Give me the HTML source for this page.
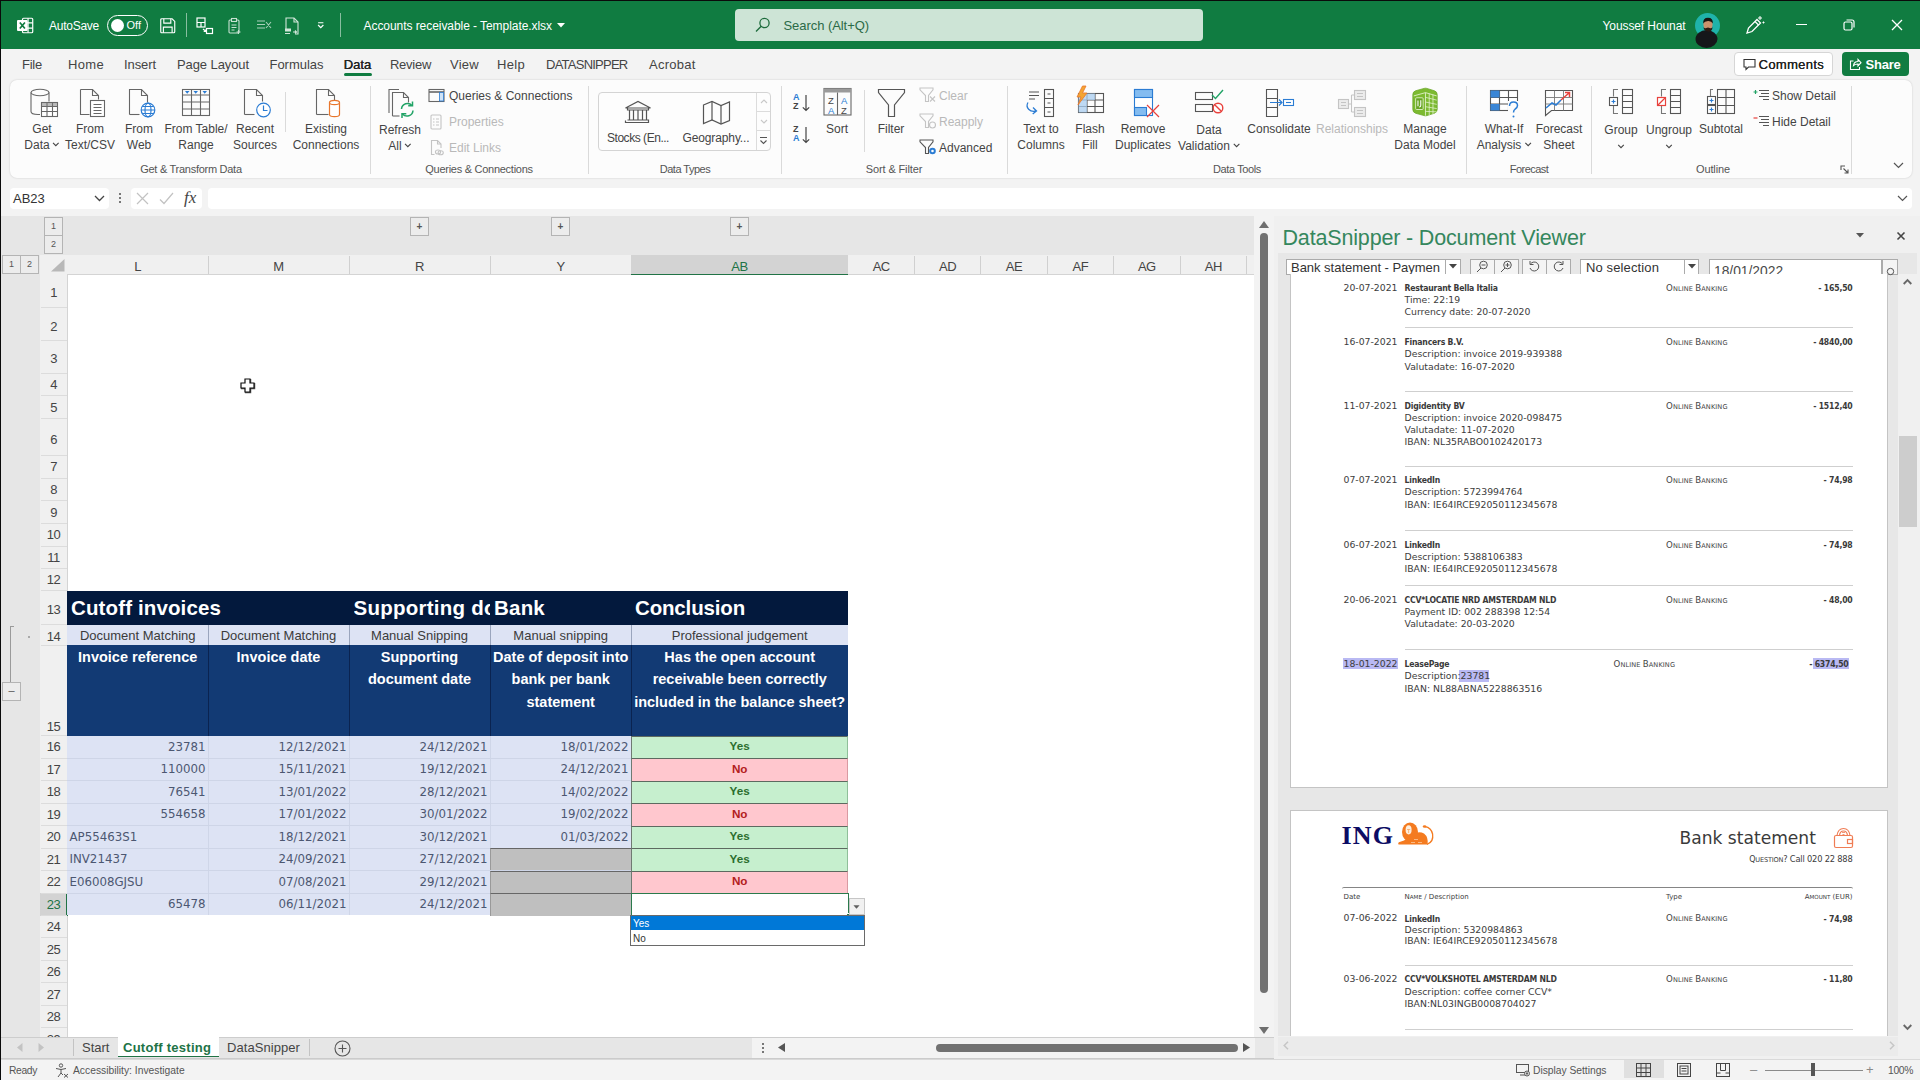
<!DOCTYPE html>
<html lang="en">
<head>
<meta charset="utf-8">
<title>Accounts receivable - Template.xlsx - Excel</title>
<style>
*{box-sizing:border-box;margin:0;padding:0}
html,body{width:1920px;height:1080px;overflow:hidden;background:#f3f3f3;font-family:"Liberation Sans",sans-serif;color:#333}
.a{position:absolute}
.t{position:absolute;white-space:nowrap;line-height:1}
svg{position:absolute;overflow:visible}
#titlebar{left:0;top:0;width:1920px;height:49px;background:#107c41}
#titlebar .t{color:#fff;font-size:12px}
#tabs .t{font-size:13px;color:#444;top:58.400px}
.iv{position:relative;display:inline-block;vertical-align:middle;margin-left:3px;top:-1px}
#ribbon{left:10px;top:80px;width:1902px;height:98px;background:#fcfcfc;border-radius:7px;box-shadow:0 0 2px rgba(0,0,0,.18)}
#ribbon .t{font-size:12px;color:#444}
#ribbon .c{text-align:center;transform:translateX(-50%)}
#ribbon .g{font-size:11px;color:#555;top:83.5px;text-align:center;transform:translateX(-50%)}
#ribbon .d{color:#b4b4b4}
.vsep{position:absolute;width:1px;background:#d8d8d8;top:13px;height:82px}
</style>
</head>
<body>
<div id="titlebar" class="a">
 <!-- excel icon -->
 <svg style="left:16.500px;top:16.500px" width="17" height="17" viewBox="0 0 20 20" fill="none" stroke="#fff" stroke-width="1.4">
  <rect x="6.5" y="1.5" width="12" height="17" rx="1.2"/>
  <path d="M6.5 7h12M6.5 13h12M13 1.5v17"/>
  <rect x="0" y="3.500" width="12.500" height="13" rx="1.200" fill="#fff" stroke="none"/>
  <path d="M3.300 6.500l6 7M9.300 6.500l-6 7" stroke="#107c41" stroke-width="2"/>
 </svg>
 <div class="t" style="left:49px;top:19.5px;font-size:12px;letter-spacing:-0.256px">AutoSave</div>
 <div class="a" style="left:107px;top:15px;width:41px;height:21px;border:1.800px solid #fff;border-radius:11px"></div>
 <div class="a" style="left:111px;top:19px;width:13px;height:13px;border-radius:50%;background:#fff"></div>
 <div class="t" style="left:126.5px;top:20px;font-size:11px;letter-spacing:0.005px">Off</div>
 <!-- save -->
 <svg style="left:159px;top:17px" width="17.500" height="17.500" viewBox="0 0 20 20" fill="none" stroke="#fff" stroke-width="1.3">
  <path d="M2 3.2Q2 2 3.2 2H15l3 3v11.800Q18 18 16.800 18H3.200Q2 18 2 16.800Z"/>
  <path d="M5.500 2v5h8V2M5 18v-6.500h10V18"/>
 </svg>
 <div class="a" style="left:186px;top:13px;width:1px;height:24px;background:rgba(255,255,255,.5)"></div>
 <!-- qat icons -->
 <svg style="left:196px;top:17px" width="18" height="18" viewBox="0 0 18 18" fill="none" stroke="#fff" stroke-width="1.2">
  <rect x="1" y="1" width="8" height="9"/><path d="M1 5.500h8M5 5.500v4.500"/><rect x="10.500" y="11.500" width="6" height="5"/><path d="M7 12l3 2.500M10 14.500v-2.300M10 14.500h-2.300"/>
 </svg>
 <svg style="left:228px;top:17px" width="14" height="18" viewBox="0 0 14 18" fill="none" stroke="#e8f3ec" stroke-width="1.100" opacity=".85">
  <rect x="1" y="3" width="10" height="13" rx="1"/><rect x="3.500" y="1.500" width="5" height="3" fill="#107c41"/><path d="M3.500 8h5M3.500 10.500h5M3.500 13h3M10.500 13v4M8.500 15h4"/>
 </svg>
 <svg style="left:256px;top:19px" width="16" height="12" viewBox="0 0 16 12" fill="none" stroke="#cfe6d8" stroke-width="1.100" opacity=".8">
  <path d="M1 2h8M1 5.500h8M1 9h8M10 3l5 6M15 3l-5 6"/>
 </svg>
 <svg style="left:284px;top:16px" width="16" height="20" viewBox="0 0 16 20" fill="none" stroke="#e8f3ec" stroke-width="1.100" opacity=".9">
  <path d="M2 13V2h8l4 4v12h-3"/><path d="M10 2v4h4"/><rect x="1" y="12.500" width="6" height="3" fill="#e8f3ec" stroke="none"/><path d="M1 17.500h5M9 16h3M11 14.500l1.500 1.500-1.500 1.500"/>
 </svg>
 <svg style="left:316.500px;top:22px" width="7.500" height="6.800" viewBox="0 0 10 9" fill="none" stroke="#fff" stroke-width="1.600">
  <path d="M1.500 1h7M1.500 4l3.500 3.500L8.500 4"/>
 </svg>
 <div class="a" style="left:339.500px;top:13px;width:1px;height:24px;background:rgba(255,255,255,.5)"></div>
 <div class="t" style="left:363.5px;top:19.5px;font-size:12px;letter-spacing:-0.058px">Accounts receivable - Template.xlsx</div>
 <svg style="left:557px;top:23px" width="8" height="5" viewBox="0 0 8 5"><path d="M0 0h8L4 4.500Z" fill="#fff"/></svg>
 <!-- search -->
 <div class="a" style="left:735px;top:9px;width:468px;height:32px;background:#cde4d6;border-radius:4px"></div>
 <svg style="left:755px;top:17px" width="16" height="16" viewBox="0 0 16 16" fill="none" stroke="#1d6b3c" stroke-width="1.300"><circle cx="9.500" cy="6" r="4.600"/><path d="M6.200 9.300L1 14.500"/></svg>
 <div class="t" style="left:783.5px;top:18.5px;font-size:13px;color:#2b6a47;letter-spacing:-0.060px">Search (Alt+Q)</div>
 <!-- user -->
 <div class="t" style="left:1602.5px;top:19.5px;font-size:12px;letter-spacing:-0.093px">Youssef Hounat</div>
 <svg style="left:1694.500px;top:12.500px" width="25" height="25" viewBox="0 0 25 25">
  <circle cx="12.500" cy="12.500" r="12.500" fill="#1fb3aa"/>
  <ellipse cx="11.500" cy="26" rx="11" ry="9" fill="#15171a"/>
  <ellipse cx="13" cy="11.500" rx="4.600" ry="5.600" fill="#c9916d"/>
  <path d="M8.400 13.500Q8.600 18 13 18.600T17.600 13.500Q17.500 15.500 15.500 15.200L13 14.600 10.500 15.200Q8.600 15.500 8.400 13.500Z" fill="#2a1a12"/>
  <path d="M8.200 10.500Q7.800 4.800 13 4.800T17.800 10.500Q16.500 7.800 13 8T8.200 10.500Z" fill="#17130f"/>
 </svg>
 <!-- pen -->
 <svg style="left:1744px;top:14px" width="22" height="22" viewBox="0 0 22 22" fill="none" stroke="#fff" stroke-width="1.300">
  <path d="M3 19l1.500-5L13 5.500l3.500 3.500L8 17.500Z"/><path d="M11 7.500l3.500 3.500"/><path d="M16 2v4M14 4h4M19.500 7.500v2M18.500 8.500h2" stroke-width="1"/>
 </svg>
 <div class="a" style="left:1796px;top:24.300px;width:10.500px;height:1.100px;background:#fff"></div>
 <svg style="left:1843px;top:19px" width="12" height="12" viewBox="0 0 12 12" fill="none" stroke="#fff" stroke-width="1.200"><rect x="1" y="3" width="8" height="8" rx="1.500"/><path d="M3.500 1h5.500Q11 1 11 3v5.500"/></svg>
 <svg style="left:1891px;top:19px" width="12" height="12" viewBox="0 0 12 12" fill="none" stroke="#fff" stroke-width="1.300"><path d="M1 1l10 10M11 1L1 11"/></svg>
</div>
<div class="a" style="left:0;top:0;width:1920px;height:1px;background:#0a0a0a"></div>
<div class="a" style="left:0;top:0;width:1.200px;height:1080px;background:#0a0a0a;z-index:50"></div>

<div id="tabs2">
 <div id="tabs" class="a" style="left:0;top:0;width:0;height:0">
 <div class="t" style="left:22px;letter-spacing:-0.238px">File</div>
 <div class="t" style="left:68px;letter-spacing:0.328px">Home</div>
 <div class="t" style="left:124px;letter-spacing:-0.086px">Insert</div>
 <div class="t" style="left:177px;letter-spacing:-0.092px">Page Layout</div>
 <div class="t" style="left:269.5px;letter-spacing:-0.023px">Formulas</div>
 <div class="t" style="left:343.5px;color:#222;text-shadow:.4px 0 0 #222;letter-spacing:0.008px">Data</div>
 <div class="a" style="left:343.500px;top:73.300px;width:28.500px;height:2.600px;border-radius:2px;background:#107c41"></div>
 <div class="t" style="left:390px;letter-spacing:-0.271px">Review</div>
 <div class="t" style="left:450px;letter-spacing:0.262px">View</div>
 <div class="t" style="left:497px;letter-spacing:0.312px">Help</div>
 <div class="t" style="left:546px;letter-spacing:-0.757px">DATASNIPPER</div>
 <div class="t" style="left:649px;letter-spacing:0.241px">Acrobat</div>
 </div>
 <div class="a" style="left:1734px;top:52px;width:99px;height:24px;background:#fff;border:1px solid #d6d6d6;border-radius:4px"></div>
 <svg style="left:1743px;top:58px" width="13" height="13" viewBox="0 0 13 13" fill="none" stroke="#333" stroke-width="1.100"><path d="M1 1.500h11v7.500H5.500L3 11.500V9H1Z"/></svg>
 <div class="t" style="left:1758.5px;top:58px;font-size:13px;color:#222;text-shadow:.2px 0 0 #222;letter-spacing:0.330px">Comments</div>
 <div class="a" style="left:1842px;top:52px;width:67px;height:24px;background:#107c41;border-radius:4px"></div>
 <svg style="left:1849px;top:57px" width="13" height="14" viewBox="0 0 13 14" fill="none" stroke="#fff" stroke-width="1.100"><path d="M4.500 4H1.500v8.500h9V10"/><path d="M4.500 8.500Q5 4.500 9 4.500V2.500l3 3.200-3 3.200V7Q6 7 4.500 8.500Z"/></svg>
 <div class="t" style="left:1865.5px;top:58px;font-size:13px;color:#fff;font-weight:bold;letter-spacing:-0.228px">Share</div>
</div>
<div class="a" id="ribbon"></div>
<div id="rib" class="a" style="left:0;top:0;width:0;height:0">
<style>
#rib .t{font-size:12px;color:#444}
#rib .c{transform:translateX(-50%);text-align:center}
#rib .g{font-size:11px;color:#555;top:164px;transform:translateX(-50%)}
#rib .d{color:#b9b9b9}
#rib .vs{position:absolute;width:1px;background:#dadada;top:86px;height:88px}
#rib svg{fill:none;stroke:#666;stroke-width:1.100}
</style>
<!-- ===== Get & Transform ===== -->
<svg style="left:28px;top:86.500px" width="32" height="32" viewBox="0 0 32 32">
 <path d="M3 5.500v19c0 1.700 3 3 7 3h2"/><ellipse cx="12" cy="5.500" rx="9" ry="3.200"/><path d="M21 5.500v9"/>
 <rect x="13.500" y="15.500" width="16" height="14" fill="#fff"/><path d="M13.500 19.500h16M13.500 24.500h16M19 15.500v14M24.500 15.500v14" /><rect x="13.500" y="15.500" width="16" height="4" fill="#777" stroke="none" opacity=".5"/>
</svg>
<div class="t c" style="left:42px;top:123px">Get</div>
<div class="t c" style="left:42px;top:139px">Data<svg class="iv" width="7" height="5" viewBox="0 0 7 5" style="stroke:#444;stroke-width:1.100;fill:none"><path d="M.7 .8l2.800 2.800L6.300 .8"/></svg></div>
<svg style="left:76px;top:86.500px" width="32" height="32" viewBox="0 0 32 32">
 <path d="M4.500 2.500h12l6 6v4M4.500 2.500v25h9"/><path d="M16.500 2.500v6h6"/><rect x="14.500" y="13.500" width="14" height="16" fill="#fff"/><path d="M17.500 17.500h8M17.500 20.500h8M17.500 23.500h8M17.500 26.500h8"/>
</svg>
<div class="t c" style="left:90px;top:123px">From</div>
<div class="t c" style="left:90px;top:139px">Text/CSV</div>
<svg style="left:125px;top:86.500px" width="32" height="32" viewBox="0 0 32 32">
 <path d="M4.500 27.500v-25h12l6 6v7"/><path d="M16.500 2.500v6h6"/><path d="M4.500 27.500h10"/>
 <g stroke="#2b7cd3" stroke-width="1.200"><circle cx="23" cy="23" r="6.800" fill="#fff"/><ellipse cx="23" cy="23" rx="3" ry="6.800"/><path d="M16.200 23h13.600M17.500 19.500h11M17.500 26.500h11"/></g>
</svg>
<div class="t c" style="left:139px;top:123px">From</div>
<div class="t c" style="left:139px;top:139px">Web</div>
<svg style="left:180px;top:86.500px" width="32" height="32" viewBox="0 0 32 32">
 <rect x="2.500" y="2.500" width="27" height="26"/><path d="M2.500 8h27M2.500 15h27M2.500 22h27M11.500 2.500v26M20.500 2.500v26"/>
 <path d="M5 4h4.500L7.200 6.800ZM13.500 4H18l-2.300 2.800ZM22.500 4H27l-2.300 2.800Z" fill="#2b7cd3" stroke="none"/>
</svg>
<div class="t c" style="left:196px;top:123px">From Table/</div>
<div class="t c" style="left:196px;top:139px">Range</div>
<svg style="left:240px;top:86.500px" width="32" height="32" viewBox="0 0 32 32">
 <path d="M4.500 27.500v-25h12l6 6v6"/><path d="M16.500 2.500v6h6"/><path d="M4.500 27.500h10"/>
 <g stroke="#2b7cd3" stroke-width="1.200"><circle cx="23.500" cy="23" r="6.800" fill="#fff"/><path d="M23.500 18.500v5h4"/></g>
</svg>
<div class="t c" style="left:255px;top:123px">Recent</div>
<div class="t c" style="left:255px;top:139px">Sources</div>
<div class="a" style="left:285px;top:92px;width:1px;height:40px;background:#dadada"></div>
<svg style="left:311px;top:86.500px" width="32" height="32" viewBox="0 0 32 32">
 <path d="M5.500 27.500v-25h12l6 6v5"/><path d="M17.500 2.500v6h6"/><path d="M5.500 27.500h12"/>
 <g stroke="#e8762c" stroke-width="1.200"><path d="M18.500 15.500v12c0 1.200 2.200 2.200 5 2.200s5-1 5-2.200v-12" fill="#fff"/><ellipse cx="23.500" cy="15.500" rx="5" ry="2.200" fill="#fff"/></g>
</svg>
<div class="t c" style="left:326px;top:123px">Existing</div>
<div class="t c" style="left:326px;top:139px">Connections</div>
<div class="t g" style="left:191px;letter-spacing:-0.274px">Get &amp; Transform Data</div>
<div class="vs" style="left:370px"></div>
<!-- ===== Queries & Connections ===== -->
<svg style="left:384px;top:86.500px" width="32" height="32" viewBox="0 0 32 32">
 <path d="M5 26V2.500h10"/><path d="M8.500 29V5.500h11l5 5v5"/><path d="M19.500 5.500v5h5"/><path d="M8.500 29h7"/>
 <g stroke="#21a366" stroke-width="1.500"><path d="M17.500 22a6 6 0 0 1 10.500-3.500M29 23.500a6 6 0 0 1-10.500 3.500"/><path d="M28.500 14.500v4.300h-4.300M18 31v-4.300h4.300"/></g>
</svg>
<div class="t c" style="left:400px;top:124px">Refresh</div>
<div class="t c" style="left:400px;top:140px">All<svg class="iv" width="7" height="5" viewBox="0 0 7 5" style="stroke:#444;stroke-width:1.100;fill:none"><path d="M.7 .8l2.800 2.800L6.300 .8"/></svg></div>
<svg style="left:428px;top:88px" width="17" height="15" viewBox="0 0 17 15"><rect x="1" y="1.500" width="15" height="12"/><path d="M1 4h15" stroke-width="1.600"/><rect x="11.500" y="4.500" width="4" height="8.500" fill="#cfe3f7" stroke="#2b7cd3" stroke-width=".8"/></svg>
<div class="t" style="left:449px;top:90px">Queries &amp; Connections</div>
<svg style="left:430px;top:114px;stroke:#c4c4c4" width="12" height="16" viewBox="0 0 12 16"><rect x="1" y="1" width="10" height="14" rx="1"/><path d="M3 5h1.500M6 5h3M3 8h1.500M6 8h3M3 11h1.500M6 11h3"/></svg>
<div class="t d" style="left:449px;top:116px">Properties</div>
<svg style="left:430px;top:139px;stroke:#c4c4c4" width="14" height="17" viewBox="0 0 14 17"><path d="M1.500 13V1.500h6l3.500 3.500v4"/><path d="M7.500 1.500V5H11"/><path d="M1.500 13v2.500h3"/><ellipse cx="8" cy="13" rx="2.600" ry="2"/><ellipse cx="10.700" cy="13.800" rx="2.600" ry="2"/></svg>
<div class="t d" style="left:449px;top:142px">Edit Links</div>
<div class="t g" style="left:479px;letter-spacing:-0.268px">Queries &amp; Connections</div>
<div class="vs" style="left:588px"></div>
<!-- ===== Data Types ===== -->
<div class="a" style="left:598px;top:92px;width:173px;height:59px;border:1px solid #d4d4d4;border-radius:4px;background:#fdfdfd"></div>
<div class="a" style="left:756px;top:93px;width:1px;height:57px;background:#dcdcdc"></div>
<div class="a" style="left:757px;top:111px;width:13px;height:1px;background:#dcdcdc"></div>
<div class="a" style="left:757px;top:130px;width:13px;height:1px;background:#dcdcdc"></div>
<svg style="left:760px;top:99px;stroke:#c8c8c8" width="8" height="5" viewBox="0 0 8 5"><path d="M1 4l3-3 3 3"/></svg>
<svg style="left:760px;top:119px;stroke:#c8c8c8" width="8" height="5" viewBox="0 0 8 5"><path d="M1 1l3 3 3-3"/></svg>
<svg style="left:759px;top:136px;stroke:#555" width="9" height="9" viewBox="0 0 9 9"><path d="M1 1.500h7M1.500 4.500l3 3 3-3"/></svg>
<svg style="left:624px;top:100px;stroke:#555;stroke-width:1.200" width="28" height="26" viewBox="0 0 28 26"><path d="M1.500 8L14 1.500 26.500 8ZM3.500 8v2h21V8M5.500 10v10M9.500 10v10M14 10v10M18.500 10v10M22.500 10v10M3.500 20h21v2.500h-23V20.500"/></svg>
<div class="t c" style="left:638px;top:132px;letter-spacing:-0.464px">Stocks (En...</div>
<svg style="left:702px;top:100px;stroke:#555;stroke-width:1.200" width="29" height="26" viewBox="0 0 29 26"><path d="M1.500 5l8.500-3.500 9 4 8.500-3.500v18.500l-8.500 3.500-9-4-8.500 3.500Z"/><path d="M10 1.500v19M19 5.500v18.500"/></svg>
<div class="t c" style="left:716px;top:132px;letter-spacing:-0.124px">Geography...</div>
<div class="t g" style="left:685px;letter-spacing:-0.495px">Data Types</div>
<div class="vs" style="left:781px"></div>
<!-- ===== Sort & Filter ===== -->
<div class="t" style="left:793px;top:93px;font-size:9px;font-weight:bold;color:#2b7cd3">A</div>
<div class="t" style="left:793px;top:102px;font-size:9px;font-weight:bold;color:#444">Z</div>
<svg style="left:802px;top:95px;stroke:#444;stroke-width:1.200" width="8" height="17" viewBox="0 0 8 17"><path d="M4 0v15.500M.8 12.300l3.200 3.200 3.200-3.200"/></svg>
<div class="t" style="left:793px;top:125px;font-size:9px;font-weight:bold;color:#444">Z</div>
<div class="t" style="left:793px;top:134px;font-size:9px;font-weight:bold;color:#2b7cd3">A</div>
<svg style="left:802px;top:127px;stroke:#444;stroke-width:1.200" width="8" height="17" viewBox="0 0 8 17"><path d="M4 0v15.500M.8 12.300l3.200 3.200 3.200-3.200"/></svg>
<svg style="left:823px;top:86.500px" width="29" height="29" viewBox="0 0 29 29"><rect x="1" y="1.500" width="27" height="26.500"/><rect x="1" y="1.500" width="27" height="4" fill="#9a9a9a" stroke="none"/><path d="M14.500 5.500v22.500"/></svg>
<div class="t" style="left:828px;top:96px;font-size:9.500px;color:#444">Z</div><div class="t" style="left:841px;top:96px;font-size:9.500px;color:#2b7cd3">A</div>
<div class="t" style="left:828px;top:106px;font-size:9.500px;color:#2b7cd3">A</div><div class="t" style="left:841px;top:106px;font-size:9.500px;color:#444">Z</div>
<div class="t c" style="left:837px;top:123px">Sort</div>
<div class="a" style="left:864px;top:90px;width:1px;height:62px;background:#dadada"></div>
<svg style="left:877px;top:88px;stroke:#555;stroke-width:1.200" width="29" height="30" viewBox="0 0 29 30"><path d="M1.500 1.500h26v3L17.500 17v11.500h-6V17L1.500 4.500Z"/></svg>
<div class="t c" style="left:891px;top:123px">Filter</div>
<svg style="left:919px;top:87px;stroke:#c4c4c4" width="18" height="17" viewBox="0 0 18 17"><path d="M1 1h13v1.800L9.500 8.500v6h-3v-6L1 2.800Z"/><path d="M11 9.500l5 5M16 9.500l-5 5"/></svg>
<div class="t d" style="left:939px;top:90px">Clear</div>
<svg style="left:919px;top:113px;stroke:#c4c4c4" width="18" height="17" viewBox="0 0 18 17"><path d="M1 1h13v1.800L9.500 8.500v6h-3v-6L1 2.800Z"/><circle cx="13.500" cy="12" r="3"/></svg>
<div class="t d" style="left:939px;top:116px">Reapply</div>
<svg style="left:919px;top:139px;stroke:#555" width="18" height="17" viewBox="0 0 18 17"><path d="M1 1h13v1.800L9.500 8.500v6h-3v-6L1 2.800Z"/><circle cx="13.500" cy="12" r="2.300" stroke="#2b7cd3" stroke-width="2" fill="#fff"/></svg>
<div class="t" style="left:939px;top:142px">Advanced</div>
<div class="t g" style="left:894px;letter-spacing:-0.121px">Sort &amp; Filter</div>
<div class="vs" style="left:1007px"></div>
<!-- ===== Data Tools ===== -->
<svg style="left:1025px;top:86.500px" width="32" height="32" viewBox="0 0 32 32">
 <path d="M4 5h10M4 8.500h10M4 12h6" stroke="#555"/><path d="M3 15.500c-3 5 2 10 8 8.500M8 20.500l3.500 3.500-3.800 3" stroke="#2b7cd3" stroke-width="1.300"/>
 <rect x="19.500" y="2.500" width="9" height="27" stroke="#555"/><path d="M19.500 11.500h9M19.500 20.500h9M22.500 7h3M22.500 16h3M22.500 25h3" stroke="#555"/>
</svg>
<div class="t c" style="left:1041px;top:123px">Text to</div>
<div class="t c" style="left:1041px;top:139px">Columns</div>
<svg style="left:1074px;top:85px" width="32" height="32" viewBox="0 0 32 32">
 <rect x="4.500" y="8.500" width="25" height="19" stroke="#555"/><path d="M4.500 15h25M4.500 21.500h25M13 8.500v19M21 8.500v19" stroke="#555"/><path d="M4.500 8.500h16.500v6.500H13v12.500H4.500Z" fill="#a9cdf0" stroke="none" opacity=".75"/>
 <path d="M8.500 1L3 12h4l-3 8L13 8H8.500L12 1Z" fill="#f4a533" stroke="#e8762c" stroke-width=".8"/>
</svg>
<div class="t c" style="left:1090px;top:123px">Flash</div>
<div class="t c" style="left:1090px;top:139px">Fill</div>
<svg style="left:1129px;top:86.500px" width="32" height="32" viewBox="0 0 32 32">
 <rect x="5.500" y="2.500" width="18" height="26" stroke="#2b7cd3" fill="#fff"/><rect x="5.500" y="2.500" width="18" height="8" fill="#84bcf0" stroke="#2b7cd3"/><rect x="5.500" y="20.500" width="12" height="8" fill="#84bcf0" stroke="#2b7cd3"/>
 <path d="M18 18l12 12M30 18L18 30" stroke="#e8413c" stroke-width="1.200"/>
</svg>
<div class="t c" style="left:1143px;top:123px">Remove</div>
<div class="t c" style="left:1143px;top:139px">Duplicates</div>
<svg style="left:1193px;top:86.500px" width="32" height="32" viewBox="0 0 32 32">
 <rect x="2.500" y="5.500" width="17" height="7" stroke="#555"/><rect x="2.500" y="17.500" width="17" height="7" stroke="#555"/>
 <path d="M19 8l3.500 3.500L30 3" stroke="#21a366" stroke-width="1.400"/><circle cx="25" cy="21" r="4.800" stroke="#e8413c" stroke-width="1.400" fill="#fff"/><path d="M21.700 17.700l6.600 6.600" stroke="#e8413c" stroke-width="1.400"/>
</svg>
<div class="t c" style="left:1209px;top:124px;letter-spacing:0.008px">Data</div>
<div class="t c" style="left:1209px;top:140px">Validation<svg class="iv" width="7" height="5" viewBox="0 0 7 5" style="stroke:#444;stroke-width:1.100;fill:none"><path d="M.7 .8l2.800 2.800L6.300 .8"/></svg></div>
<svg style="left:1263px;top:86.500px" width="32" height="32" viewBox="0 0 32 32">
 <path d="M3.500 2.500h11v9h-11ZM3.500 11.500v9h11v-9M3.500 20.500v9h11v-9" stroke="#555"/><path d="M7 15.500h12M16 12.500l3 3-3 3" stroke="#2b7cd3" stroke-width="1.200"/><rect x="20.500" y="12.500" width="10" height="6" stroke="#2b7cd3" fill="#fff"/><path d="M23 15.500h5" stroke="#2b7cd3"/>
</svg>
<div class="t c" style="left:1279px;top:123px">Consolidate</div>
<svg style="left:1337px;top:88px;stroke:#c4c4c4" width="32" height="32" viewBox="0 0 32 32">
 <rect x="1.500" y="11.500" width="10" height="9" fill="#ececec"/><rect x="17.500" y="2.500" width="11" height="9" fill="#ececec"/><rect x="17.500" y="19.500" width="11" height="9" fill="#ececec"/><path d="M11.500 16h3M14.500 7v17M14.500 7h3M14.500 24h3M4 14.500h5M4 17.500h5M20 5.500h6M20 8.500h6M20 22.500h6M20 25.500h6"/>
</svg>
<div class="t c d" style="left:1352px;top:123px">Relationships</div>
<svg style="left:1410px;top:86px" width="30" height="32" viewBox="0 0 32 32">
 <path d="M3 8Q3 5 6 4L15 1.500Q16.500 1 18 1.500L26 4Q29 5 29 8V24Q29 27 26 28L18 30.500Q16.500 31 15 30.500L6 28Q3 27 3 24Z" fill="#7cba30" stroke="#6aa628" stroke-width=".8"/>
 <path d="M16.500 6V30.500M16.500 6L4 9.500M16.500 6L28.500 9.500" stroke="#e6f4d2" stroke-width=".9"/>
 <path d="M16.500 11l12 3M16.500 16l12 2.500M16.500 21l12 2M16.500 26l12 .5M20.500 7v23M24.500 8v21" stroke="#e6f4d2" stroke-width=".8"/>
 <rect x="6" y="11.500" width="8" height="12.500" rx="1" fill="#68a524" stroke="#e6f4d2" stroke-width=".9"/>
 <path d="M8.500 14.500v6M11.500 14v5.500q0 1.800-1.800 1.800" stroke="#fff" stroke-width="1.100"/>
</svg>
<div class="t c" style="left:1425px;top:123px">Manage</div>
<div class="t c" style="left:1425px;top:139px">Data Model</div>
<div class="t g" style="left:1237px;letter-spacing:-0.378px">Data Tools</div>
<div class="vs" style="left:1466px"></div>
<!-- ===== Forecast ===== -->
<svg style="left:1488px;top:86.500px" width="32" height="32" viewBox="0 0 32 32">
 <rect x="2.500" y="3.500" width="27" height="20" stroke="#555" fill="#fff"/><path d="M2.500 10.500h27M2.500 17h27M11.500 3.500v20M20.500 3.500v20" stroke="#555"/><rect x="2.500" y="3.500" width="9" height="7" fill="#3a86d6" stroke="none"/><rect x="2.500" y="17" width="9" height="6.500" fill="#3a86d6" stroke="none"/>
 <rect x="20" y="14" width="12" height="17" fill="#fcfcfc" stroke="none"/><path d="M21.500 19q0-4 4-4t4 3.500q0 2-2.300 3.500-1.700 1.200-1.700 3.500" stroke="#2b7cd3" stroke-width="1.500"/><circle cx="25.500" cy="29.500" r="1" fill="#2b7cd3" stroke="none"/>
</svg>
<div class="t c" style="left:1504px;top:123px">What-If</div>
<div class="t c" style="left:1504px;top:139px">Analysis<svg class="iv" width="7" height="5" viewBox="0 0 7 5" style="stroke:#444;stroke-width:1.100;fill:none"><path d="M.7 .8l2.800 2.800L6.300 .8"/></svg></div>
<svg style="left:1543px;top:86.500px" width="32" height="32" viewBox="0 0 32 32">
 <path d="M2.500 3.500h27v20h-21l-6 5Z" stroke="#555"/><path d="M2.500 10.500h27M2.500 17h27M11.500 3.500v20M20.500 3.500v20" stroke="#777" stroke-width=".9"/>
 <path d="M3 21l6-5 4 2 5-5" stroke="#2b7cd3" stroke-width="1.500"/><path d="M18 13l8-7M22 5.500h4.500V10" stroke="#e8413c" stroke-width="1.500"/>
</svg>
<div class="t c" style="left:1559px;top:123px">Forecast</div>
<div class="t c" style="left:1559px;top:139px">Sheet</div>
<div class="t g" style="left:1529px;letter-spacing:-0.537px">Forecast</div>
<div class="vs" style="left:1591px"></div>
<!-- ===== Outline ===== -->
<svg style="left:1605px;top:86.500px" width="32" height="32" viewBox="0 0 32 32">
 <rect x="17.500" y="2.500" width="10" height="24" stroke="#555"/><path d="M17.500 8.500h10M17.500 14.500h10M17.500 20.500h10" stroke="#555"/><path d="M13 2.500H8.500v7M8.500 19v7.500H13" stroke="#777"/>
 <rect x="4.500" y="10.500" width="8" height="8" stroke="#555" fill="#fff"/><path d="M8.500 12.500v4M6.500 14.500h4" stroke="#2b7cd3" stroke-width="1.200"/>
</svg>
<div class="t c" style="left:1621px;top:124px">Group</div>
<div class="t c" style="left:1621px;top:141px"><svg class="iv" width="7" height="5" viewBox="0 0 7 5" style="margin-left:0;stroke:#444;stroke-width:1.100;fill:none"><path d="M.7 .8l2.800 2.800L6.300 .8"/></svg></div>
<svg style="left:1653px;top:86.500px" width="32" height="32" viewBox="0 0 32 32">
 <rect x="17.500" y="2.500" width="10" height="24" stroke="#555"/><path d="M17.500 8.500h10M17.500 14.500h10M17.500 20.500h10" stroke="#555"/><path d="M13 2.500H8.500v7M8.500 19v7.500H13" stroke="#777"/>
 <rect x="4.500" y="10.500" width="8" height="8" stroke="#e8413c" fill="#fff" stroke-width="1.200"/><path d="M5 18l7-7" stroke="#e8413c" stroke-width="1.200"/>
</svg>
<div class="t c" style="left:1669px;top:124px">Ungroup</div>
<div class="t c" style="left:1669px;top:141px"><svg class="iv" width="7" height="5" viewBox="0 0 7 5" style="margin-left:0;stroke:#444;stroke-width:1.100;fill:none"><path d="M.7 .8l2.800 2.800L6.300 .8"/></svg></div>
<svg style="left:1705px;top:86.500px" width="32" height="32" viewBox="0 0 32 32">
 <rect x="12.500" y="2.500" width="17" height="24" stroke="#555"/><path d="M12.500 10.500h17M12.500 18.500h17M21 2.500v24" stroke="#555"/><path d="M8 2.500H5.500v7" stroke="#777"/>
 <rect x="2.500" y="9.500" width="8" height="8" stroke="#555" fill="#fff"/><path d="M6.500 11.500v4M4.500 13.500h4" stroke="#2b7cd3" stroke-width="1.200"/>
 <rect x="2.500" y="18.500" width="8" height="8" stroke="#555" fill="#fff"/><path d="M6.500 20.500v4M4.500 22.500h4" stroke="#2b7cd3" stroke-width="1.200"/>
</svg>
<div class="t c" style="left:1721px;top:123px">Subtotal</div>
<svg style="left:1753px;top:89px" width="17" height="12" viewBox="0 0 17 12"><path d="M6 1.500h10M8 4.500h8M6 7.500h10M10 10.500h6" stroke="#555" stroke-width="1.200"/><path d="M.5 3h4M2.500 1v4" stroke="#21a366" stroke-width="1.200"/></svg>
<div class="t" style="left:1772px;top:90px">Show Detail</div>
<svg style="left:1753px;top:115px" width="17" height="12" viewBox="0 0 17 12"><path d="M6 1.500h10M8 4.500h8M6 7.500h10M10 10.500h6" stroke="#555" stroke-width="1.200"/><path d="M.5 3h4" stroke="#e8413c" stroke-width="1.200"/></svg>
<div class="t" style="left:1772px;top:116px">Hide Detail</div>
<div class="t g" style="left:1713px;letter-spacing:-0.123px">Outline</div>
<svg style="left:1840px;top:165px" width="9" height="9" viewBox="0 0 9 9"><path d="M1 5V1h4M3.500 3.500l4.500 4.500M8 4.500V8H4.500" stroke="#555"/></svg>
<div class="vs" style="left:1851px"></div>
<svg style="left:1893px;top:162px" width="11" height="7" viewBox="0 0 11 7"><path d="M1 1l4.500 4.500L10 1" stroke="#555" stroke-width="1.200"/></svg>
</div>
<!-- ===== Formula bar ===== -->
<div class="a" style="left:10px;top:188px;width:99px;height:21px;background:#fff;border-radius:4px"></div>
<div class="t" style="left:13px;top:192px;font-size:13px;color:#333">AB23</div>
<svg style="left:94px;top:195px" width="11" height="7" viewBox="0 0 11 7" fill="none" stroke="#444" stroke-width="1.300"><path d="M1 1l4.500 4.500L10 1"/></svg>
<div class="a" style="left:119px;top:193px;width:2px;height:2px;background:#777;box-shadow:0 4px 0 #777,0 8px 0 #777"></div>
<div class="a" style="left:131px;top:188px;width:71px;height:21px;background:#fff;border-radius:4px"></div>
<svg style="left:136px;top:192px" width="13" height="13" viewBox="0 0 13 13" fill="none" stroke="#c2c2c2" stroke-width="1.200"><path d="M1 1l11 11M12 1L1 12"/></svg>
<svg style="left:159px;top:192px" width="15" height="13" viewBox="0 0 15 13" fill="none" stroke="#c2c2c2" stroke-width="1.200"><path d="M1 7.500l4 4L14 1"/></svg>
<div class="t" style="left:184px;top:188.500px;font-size:17px;color:#444;font-family:'Liberation Serif',serif;font-style:italic">fx</div>
<div class="a" style="left:208px;top:188px;width:1704px;height:21px;background:#fff;border-radius:4px"></div>
<svg style="left:1897px;top:195px" width="11" height="7" viewBox="0 0 11 7" fill="none" stroke="#555" stroke-width="1.200"><path d="M1 1l4.500 4.500L10 1"/></svg>
<style>
#sheet .rh{position:absolute;left:40px;width:27px;text-align:center;font-size:13px;letter-spacing:-.6px;color:#444;line-height:1;white-space:nowrap}
#sheet .rl{position:absolute;left:41px;width:26px;height:1px;background:#dcdcdc}
#sheet .ch{position:absolute;top:259.500px;font-size:13px;letter-spacing:-.5px;color:#444;line-height:1;transform:translateX(-50%);white-space:nowrap}
#sheet .cl{position:absolute;top:256px;width:1px;height:18px;background:#d0d0d0}
#sheet .ob{position:absolute;width:19px;height:19px;border:1px solid #b4b4b4;background:#ececec;font-size:9px;color:#555;text-align:center;line-height:17px}
#sheet .cell{position:absolute;white-space:nowrap;line-height:1;font-family:"DejaVu Sans","Liberation Sans",sans-serif;font-size:11.800px;color:#4c5771}
#sheet .h14{position:absolute;font-size:13px;color:#3b3b3b;text-align:center;line-height:1;white-space:nowrap}
#sheet .h15{position:absolute;font-size:14.500px;font-weight:bold;color:#fff;text-align:center;line-height:22.250px;top:646px}
#sheet .h13{position:absolute;font-size:20.500px;font-weight:bold;color:#fff;line-height:1;top:598px;white-space:nowrap;overflow:hidden}
</style>
<div id="sheet" class="a" style="left:0;top:0;width:0;height:0">
<div class="a" style="left:0;top:216px;width:1254px;height:821px;background:#e6e6e6"></div>
<div class="a" style="left:67px;top:274px;width:1187px;height:763px;background:#fff"></div>
<div class="a" style="left:40px;top:255px;width:1214px;height:19.500px;background:#f0f0f0"></div>
<div class="a" style="left:40px;top:274px;width:27.500px;height:763px;background:#f0f0f0"></div>
<div class="a" style="left:67px;top:274px;width:1187px;height:1px;background:#d4d4d4"></div>
<div class="a" style="left:67px;top:274px;width:1px;height:763px;background:#d4d4d4"></div>
<svg style="left:51px;top:259px" width="14" height="13" viewBox="0 0 14 13"><path d="M13.500 0v12.500H0Z" fill="#b8b8b8"/></svg>

<div class="ob" style="left:44px;top:217px">1</div><div class="ob" style="left:44px;top:235px">2</div>
<div class="ob" style="left:2px;top:255px">1</div><div class="ob" style="left:20px;top:255px">2</div>
<div class="ob" style="left:410px;top:217px;font-size:10px;font-weight:bold">+</div>
<div class="ob" style="left:551px;top:217px;font-size:10px;font-weight:bold">+</div>
<div class="ob" style="left:730px;top:217px;font-size:10px;font-weight:bold">+</div>
<div class="a" style="left:631px;top:255px;width:217px;height:19.500px;background:#d3d3d3;border-bottom:1.500px solid #217346"></div>
<div class="ch" style="left:137.7px">L</div>
<div class="cl" style="left:207.5px"></div>
<div class="ch" style="left:278.5px">M</div>
<div class="cl" style="left:348.5px"></div>
<div class="ch" style="left:419.5px">R</div>
<div class="cl" style="left:489.5px"></div>
<div class="ch" style="left:560.5px">Y</div>
<div class="ch" style="left:739.5px;color:#217346">AB</div>
<div class="ch" style="left:881.2px">AC</div>
<div class="cl" style="left:914.0px"></div>
<div class="ch" style="left:947.6px">AD</div>
<div class="cl" style="left:980.2px"></div>
<div class="ch" style="left:1014.0px">AE</div>
<div class="cl" style="left:1046.8px"></div>
<div class="ch" style="left:1080.4px">AF</div>
<div class="cl" style="left:1113.0px"></div>
<div class="ch" style="left:1146.8px">AG</div>
<div class="cl" style="left:1179.5px"></div>
<div class="ch" style="left:1213.3px">AH</div>
<div class="cl" style="left:1246.2px"></div>
<div class="a" style="left:40px;top:893px;width:27.500px;height:22.500px;background:#d3d3d3;border-right:2px solid #217346"></div>
<div class="a" style="left:40px;top:274px;width:28px;height:763px;overflow:hidden">
<div class="rh" style="left:0;top:12.3px">1</div>
<div class="rl" style="left:1px;top:33.0px"></div>
<div class="rh" style="left:0;top:45.5px">2</div>
<div class="rl" style="left:1px;top:66.0px"></div>
<div class="rh" style="left:0;top:78.0px">3</div>
<div class="rl" style="left:1px;top:99.1px"></div>
<div class="rh" style="left:0;top:104.1px">4</div>
<div class="rl" style="left:1px;top:120.7px"></div>
<div class="rh" style="left:0;top:126.9px">5</div>
<div class="rl" style="left:1px;top:143.5px"></div>
<div class="rh" style="left:0;top:159.3px">6</div>
<div class="rl" style="left:1px;top:180.7px"></div>
<div class="rh" style="left:0;top:186.2px">7</div>
<div class="rl" style="left:1px;top:203.8px"></div>
<div class="rh" style="left:0;top:208.7px">8</div>
<div class="rl" style="left:1px;top:226.1px"></div>
<div class="rh" style="left:0;top:231.5px">9</div>
<div class="rl" style="left:1px;top:248.6px"></div>
<div class="rh" style="left:0;top:254.1px">10</div>
<div class="rl" style="left:1px;top:271.8px"></div>
<div class="rh" style="left:0;top:276.9px">11</div>
<div class="rl" style="left:1px;top:294.0px"></div>
<div class="rh" style="left:0;top:299.1px">12</div>
<div class="rl" style="left:1px;top:316.4px"></div>
<div class="rh" style="left:0;top:329.0px">13</div>
<div class="rl" style="left:1px;top:350.1px"></div>
<div class="rh" style="left:0;top:356.0px">14</div>
<div class="rl" style="left:1px;top:370.7px"></div>
<div class="rh" style="left:0;top:446.0px">15</div>
<div class="rl" style="left:1px;top:461.1px"></div>
<div class="rh" style="left:0;top:466.4px">16</div>
<div class="rl" style="left:1px;top:483.6px"></div>
<div class="rh" style="left:0;top:488.9px">17</div>
<div class="rl" style="left:1px;top:506.1px"></div>
<div class="rh" style="left:0;top:511.3px">18</div>
<div class="rl" style="left:1px;top:528.5px"></div>
<div class="rh" style="left:0;top:533.8px">19</div>
<div class="rl" style="left:1px;top:551.0px"></div>
<div class="rh" style="left:0;top:556.3px">20</div>
<div class="rl" style="left:1px;top:573.5px"></div>
<div class="rh" style="left:0;top:578.8px">21</div>
<div class="rl" style="left:1px;top:596.0px"></div>
<div class="rh" style="left:0;top:601.3px">22</div>
<div class="rl" style="left:1px;top:618.5px"></div>
<div class="rh" style="left:0;top:623.7px;color:#217346">23</div>
<div class="rl" style="left:1px;top:640.9px"></div>
<div class="rh" style="left:0;top:646.2px">24</div>
<div class="rl" style="left:1px;top:663.4px"></div>
<div class="rh" style="left:0;top:668.7px">25</div>
<div class="rl" style="left:1px;top:685.9px"></div>
<div class="rh" style="left:0;top:691.2px">26</div>
<div class="rl" style="left:1px;top:708.4px"></div>
<div class="rh" style="left:0;top:713.7px">27</div>
<div class="rl" style="left:1px;top:730.9px"></div>
<div class="rh" style="left:0;top:736.1px">28</div>
<div class="rl" style="left:1px;top:753.3px"></div>
<div class="rh" style="left:0;top:758.6px">29</div>
<div class="rl" style="left:1px;top:775.8px"></div>
</div>
<div class="a" style="left:10px;top:626px;width:1px;height:57px;background:#9a9a9a"></div><div class="a" style="left:10px;top:626px;width:4px;height:1px;background:#9a9a9a"></div>
<div class="ob" style="left:2px;top:681.500px;font-size:11px;line-height:15px">&#8211;</div>
<div class="a" style="left:28px;top:636px;width:1.500px;height:1.500px;background:#aaa"></div>
<div class="a" style="left:67.400px;top:591.300px;width:780.600px;height:33.400px;background:#03193d"></div>
<div class="a" style="left:67.400px;top:624.700px;width:780.600px;height:20.600px;background:#dde3f4"></div>
<div class="a" style="left:67.400px;top:645.300px;width:780.600px;height:90.400px;background:#123a74"></div>
<div class="a" style="left:67.400px;top:735.700px;width:564px;height:179.800px;background:#dde3f4"></div>
<div class="h13" style="left:71px;width:270px;letter-spacing:0.128px">Cutoff invoices</div>
<div class="h13" style="left:353.500px;width:136.500px;letter-spacing:.25px">Supporting document</div>
<div class="h13" style="left:494px;width:130px;letter-spacing:0.215px">Bank</div>
<div class="h13" style="left:635px;width:200px;letter-spacing:-0.161px">Conclusion</div>
<div class="h14" style="left:67.4px;width:140.6px;top:629px">Document Matching</div>
<div class="h15" style="left:57.4px;width:160.6px">Invoice reference</div>
<div class="h14" style="left:208.0px;width:141.0px;top:629px">Document Matching</div>
<div class="h15" style="left:198.0px;width:161.0px">Invoice date</div>
<div class="h14" style="left:349.0px;width:141.0px;top:629px">Manual Snipping</div>
<div class="h15" style="left:339.0px;width:161.0px">Supporting<br>document date</div>
<div class="h14" style="left:490.0px;width:141.4px;top:629px">Manual snipping</div>
<div class="h15" style="left:480.0px;width:161.4px">Date of deposit into<br>bank per bank<br>statement</div>
<div class="h14" style="left:631.4px;width:216.6px;top:629px">Professional judgement</div>
<div class="h15" style="left:621.4px;width:236.6px">Has the open account<br>receivable been correctly<br>included in the balance sheet?</div>
<div class="a" style="left:207.5px;top:624.700px;width:1px;height:20.600px;background:#9aa5bd"></div>
<div class="a" style="left:207.5px;top:645.300px;width:1px;height:90.400px;background:#0a2350"></div>
<div class="a" style="left:348.5px;top:624.700px;width:1px;height:20.600px;background:#9aa5bd"></div>
<div class="a" style="left:348.5px;top:645.300px;width:1px;height:90.400px;background:#0a2350"></div>
<div class="a" style="left:489.5px;top:624.700px;width:1px;height:20.600px;background:#9aa5bd"></div>
<div class="a" style="left:489.5px;top:645.300px;width:1px;height:90.400px;background:#0a2350"></div>
<div class="a" style="left:630.9px;top:624.700px;width:1px;height:20.600px;background:#9aa5bd"></div>
<div class="a" style="left:630.9px;top:645.300px;width:1px;height:90.400px;background:#0a2350"></div>
<div class="a" style="left:207.5px;top:735.700px;width:1px;height:179.800px;background:#cfd6e8"></div>
<div class="a" style="left:348.5px;top:735.700px;width:1px;height:179.800px;background:#cfd6e8"></div>
<div class="a" style="left:489.5px;top:735.700px;width:1px;height:179.800px;background:#cfd6e8"></div>
<div class="cell" style="right:-205.5px;top:741.7px">23781</div>
<div class="cell" style="right:-346.5px;top:741.7px">12/12/2021</div>
<div class="cell" style="right:-487.5px;top:741.7px">24/12/2021</div>
<div class="cell" style="right:-628.5px;top:741.7px">18/01/2022</div>
<div class="a" style="left:631.400px;top:735.6px;width:216.600px;height:22.5px;background:#c6efce;border-top:1px solid #5d6a60;border-left:1px solid #6f7a72;border-right:1px solid #8fbf99"></div>
<div class="t" style="left:739.700px;top:740.4px;transform:translateX(-50%);font-size:11.700px;font-weight:bold;color:#2b6e2e">Yes</div>
<div class="a" style="left:67.400px;top:757.6px;width:564px;height:1px;background:#ced5e7"></div>
<div class="cell" style="right:-205.5px;top:764.2px">110000</div>
<div class="cell" style="right:-346.5px;top:764.2px">15/11/2021</div>
<div class="cell" style="right:-487.5px;top:764.2px">19/12/2021</div>
<div class="cell" style="right:-628.5px;top:764.2px">24/12/2021</div>
<div class="a" style="left:631.400px;top:758.1px;width:216.600px;height:22.5px;background:#ffc7ce;border-top:1px solid #5d6a60;border-left:1px solid #6f7a72;border-right:1px solid #d99aa2"></div>
<div class="t" style="left:739.700px;top:762.9px;transform:translateX(-50%);font-size:11.700px;font-weight:bold;color:#b32020">No</div>
<div class="a" style="left:67.400px;top:780.1px;width:564px;height:1px;background:#ced5e7"></div>
<div class="cell" style="right:-205.5px;top:786.6px">76541</div>
<div class="cell" style="right:-346.5px;top:786.6px">13/01/2022</div>
<div class="cell" style="right:-487.5px;top:786.6px">28/12/2021</div>
<div class="cell" style="right:-628.5px;top:786.6px">14/02/2022</div>
<div class="a" style="left:631.400px;top:780.6px;width:216.600px;height:22.5px;background:#c6efce;border-top:1px solid #5d6a60;border-left:1px solid #6f7a72;border-right:1px solid #8fbf99"></div>
<div class="t" style="left:739.700px;top:785.3px;transform:translateX(-50%);font-size:11.700px;font-weight:bold;color:#2b6e2e">Yes</div>
<div class="a" style="left:67.400px;top:802.5px;width:564px;height:1px;background:#ced5e7"></div>
<div class="cell" style="right:-205.5px;top:809.1px">554658</div>
<div class="cell" style="right:-346.5px;top:809.1px">17/01/2022</div>
<div class="cell" style="right:-487.5px;top:809.1px">30/01/2022</div>
<div class="cell" style="right:-628.5px;top:809.1px">19/02/2022</div>
<div class="a" style="left:631.400px;top:803.0px;width:216.600px;height:22.5px;background:#ffc7ce;border-top:1px solid #5d6a60;border-left:1px solid #6f7a72;border-right:1px solid #d99aa2"></div>
<div class="t" style="left:739.700px;top:807.8px;transform:translateX(-50%);font-size:11.700px;font-weight:bold;color:#b32020">No</div>
<div class="a" style="left:67.400px;top:825.0px;width:564px;height:1px;background:#ced5e7"></div>
<div class="cell" style="left:69.500px;top:831.6px">AP55463S1</div>
<div class="cell" style="right:-346.5px;top:831.6px">18/12/2021</div>
<div class="cell" style="right:-487.5px;top:831.6px">30/12/2021</div>
<div class="cell" style="right:-628.5px;top:831.6px">01/03/2022</div>
<div class="a" style="left:631.400px;top:825.5px;width:216.600px;height:22.5px;background:#c6efce;border-top:1px solid #5d6a60;border-left:1px solid #6f7a72;border-right:1px solid #8fbf99"></div>
<div class="t" style="left:739.700px;top:830.3px;transform:translateX(-50%);font-size:11.700px;font-weight:bold;color:#2b6e2e">Yes</div>
<div class="a" style="left:67.400px;top:847.5px;width:564px;height:1px;background:#ced5e7"></div>
<div class="cell" style="left:69.500px;top:854.1px">INV21437</div>
<div class="cell" style="right:-346.5px;top:854.1px">24/09/2021</div>
<div class="cell" style="right:-487.5px;top:854.1px">27/12/2021</div>
<div class="a" style="left:490px;top:848.0px;width:141.400px;height:22.5px;background:#bfbfbf;border-top:1px solid #666;border-left:1px solid #999"></div>
<div class="a" style="left:631.400px;top:848.0px;width:216.600px;height:22.5px;background:#c6efce;border-top:1px solid #5d6a60;border-left:1px solid #6f7a72;border-right:1px solid #8fbf99"></div>
<div class="t" style="left:739.700px;top:852.8px;transform:translateX(-50%);font-size:11.700px;font-weight:bold;color:#2b6e2e">Yes</div>
<div class="a" style="left:67.400px;top:870.0px;width:564px;height:1px;background:#ced5e7"></div>
<div class="cell" style="left:69.500px;top:876.6px">E06008GJSU</div>
<div class="cell" style="right:-346.5px;top:876.6px">07/08/2021</div>
<div class="cell" style="right:-487.5px;top:876.6px">29/12/2021</div>
<div class="a" style="left:490px;top:870.5px;width:141.400px;height:22.5px;background:#bfbfbf;border-top:1px solid #666;border-left:1px solid #999"></div>
<div class="a" style="left:631.400px;top:870.5px;width:216.600px;height:22.5px;background:#ffc7ce;border-top:1px solid #5d6a60;border-left:1px solid #6f7a72;border-right:1px solid #d99aa2"></div>
<div class="t" style="left:739.700px;top:875.3px;transform:translateX(-50%);font-size:11.700px;font-weight:bold;color:#b32020">No</div>
<div class="a" style="left:67.400px;top:892.5px;width:564px;height:1px;background:#ced5e7"></div>
<div class="cell" style="right:-205.5px;top:899.0px">65478</div>
<div class="cell" style="right:-346.5px;top:899.0px">06/11/2021</div>
<div class="cell" style="right:-487.5px;top:899.0px">24/12/2021</div>
<div class="a" style="left:490px;top:893.0px;width:141.400px;height:22.5px;background:#bfbfbf;border-top:1px solid #666;border-left:1px solid #999"></div>
<div class="a" style="left:630.500px;top:892.500px;width:218px;height:23.500px;background:#fff;border:1.300px solid #2b7a4c"></div>
<div class="a" style="left:846px;top:913px;width:4px;height:4px;background:#2b7a4c;border:1px solid #fff"></div>
<div class="a" style="left:848.500px;top:898px;width:16px;height:16.500px;background:#f1f1f1;border:1px solid #c6c6c6"></div>
<svg style="left:853px;top:904.500px" width="7" height="4" viewBox="0 0 8 4"><path d="M.5 0h7L4 4Z" fill="#606060"/></svg>
<div class="a" style="left:630px;top:915px;width:234.500px;height:30.800px;background:#fff;border:1px solid #6a6a6a"></div>
<div class="a" style="left:631px;top:915.500px;width:232.500px;height:14.500px;background:#0078d7"></div>
<div class="t" style="left:633px;top:919px;font-size:10px;color:#fff">Yes</div>
<div class="t" style="left:633px;top:933.500px;font-size:10px;color:#333">No</div>
<svg style="left:240px;top:378px" width="15" height="15" viewBox="0 0 15 15"><path d="M5.600 1.600h5v4h4v5h-4v4h-5v-4h-4v-5h4Z" fill="#555" stroke="#555" stroke-width="1.300"/><path d="M5 1h5v4h4v5h-4v4H5v-4H1V5h4Z" fill="#fff" stroke="#111" stroke-width="1.200"/></svg>
<div class="a" style="left:1254px;top:216px;width:19.500px;height:821px;background:#f3f3f3"></div>
<svg style="left:1259px;top:221px" width="10" height="7" viewBox="0 0 10 7"><path d="M5 0l5 7H0Z" fill="#6e6e6e"/></svg>
<div class="a" style="left:1259.500px;top:233px;width:8px;height:760px;border-radius:4px;background:#717171"></div>
<svg style="left:1259px;top:1027px" width="10" height="7" viewBox="0 0 10 7"><path d="M0 0h10L5 7Z" fill="#6e6e6e"/></svg>
<div class="a" style="left:0;top:1037px;width:1273.500px;height:22px;background:#f3f3f3;border-top:1px solid #cdcdcd;border-bottom:1px solid #cbcbcb"></div><div class="a" style="left:0;top:1037px;width:752px;height:21px;background:#e6e6e6;border-top:1px solid #cdcdcd"></div><div class="a" style="left:1255px;top:1038px;width:18.500px;height:20px;background:#e8e8e8"></div>
<svg style="left:17px;top:1043px" width="6" height="9" viewBox="0 0 6 9"><path d="M5.500 0v9L0 4.500Z" fill="#c3c3c3"/></svg>
<svg style="left:38px;top:1043px" width="6" height="9" viewBox="0 0 6 9"><path d="M.5 0v9L6 4.500Z" fill="#c3c3c3"/></svg>
<div class="a" style="left:73px;top:1039px;width:1px;height:17px;background:#c3c3c3"></div>
<div class="t" style="left:82px;top:1041px;font-size:13px;color:#444;letter-spacing:-0.034px">Start</div>
<div class="a" style="left:117.500px;top:1037px;width:101px;height:20px;background:#fff;border-bottom:1.500px solid #217346"></div>
<div class="t" style="left:123px;top:1041px;font-size:13px;color:#217346;font-weight:bold;letter-spacing:0.269px">Cutoff testing</div>
<div class="t" style="left:227px;top:1041px;font-size:13px;color:#444;letter-spacing:0.065px">DataSnipper</div>
<div class="a" style="left:309px;top:1039px;width:1px;height:17px;background:#c3c3c3"></div>
<svg style="left:334px;top:1040px" width="17" height="17" viewBox="0 0 17 17" fill="none" stroke="#555" stroke-width="1.100"><circle cx="8.500" cy="8.500" r="7.500"/><path d="M8.500 4.500v8M4.500 8.500h8"/></svg>
<div class="a" style="left:762px;top:1043px;width:2px;height:2px;background:#777;box-shadow:0 4px 0 #777,0 8px 0 #777"></div>
<svg style="left:778px;top:1043px" width="7" height="9" viewBox="0 0 7 9"><path d="M7 0v9L0 4.500Z" fill="#555"/></svg>
<div class="a" style="left:936px;top:1043.500px;width:302px;height:8px;border-radius:4px;background:#717171"></div>
<svg style="left:1243px;top:1043px" width="7" height="9" viewBox="0 0 7 9"><path d="M0 0v9l7-4.500Z" fill="#555"/></svg>

<div class="a" style="left:0;top:1059px;width:1920px;height:21px;background:#f3f3f3;border-top:1px solid #d9d9d9"></div>
<div class="t" style="left:9px;top:1066px;font-size:10.300px;color:#555;letter-spacing:-0.353px">Ready</div>
<svg style="left:55px;top:1063px" width="14" height="15" viewBox="0 0 14 15" fill="none" stroke="#555" stroke-width="1"><circle cx="6" cy="2.500" r="1.700"/><path d="M1 5.500l5 1 5-1M6 6.500v3.500M6 10l-3 4M6 10l2 2M9 11l4 3.500M13 11l-4 3.500"/></svg>
<div class="t" style="left:73px;top:1066px;font-size:10.300px;color:#555;letter-spacing:0.003px">Accessibility: Investigate</div>
<svg style="left:1516px;top:1064px" width="15" height="13" viewBox="0 0 15 13" fill="none" stroke="#555" stroke-width="1"><rect x=".5" y=".5" width="12" height="8"/><path d="M4 11h5"/><circle cx="11" cy="9.500" r="2.500" fill="#f3f3f3"/><circle cx="11" cy="9.500" r=".8" fill="#555"/></svg>
<div class="t" style="left:1533px;top:1066px;font-size:10.300px;color:#555;letter-spacing:-0.021px">Display Settings</div>
<div class="a" style="left:1624px;top:1059.500px;width:39.500px;height:18.500px;background:#e0e0e0"></div>
<svg style="left:1636px;top:1063px" width="15" height="14" viewBox="0 0 15 14" fill="none" stroke="#444" stroke-width="1"><rect x=".5" y=".5" width="14" height="13"/><path d="M.5 5h14M.5 9.500h14M5 .5v13M10 .5v13"/></svg>
<svg style="left:1677px;top:1063px" width="14" height="14" viewBox="0 0 14 14" fill="none" stroke="#444" stroke-width="1"><rect x=".5" y=".5" width="13" height="13"/><rect x="3" y="3" width="8" height="8"/><path d="M4.500 5.500h5M4.500 8h5"/></svg>
<svg style="left:1716px;top:1063px" width="14" height="14" viewBox="0 0 14 14" fill="none" stroke="#444" stroke-width="1"><rect x=".5" y=".5" width="13" height="13"/><path d="M4.500 .5v7h5v-7M.5 10h4M9.500 10h4" /></svg>
<div class="t" style="left:1750px;top:1063px;font-size:13px;color:#8a8a8a">&#8211;</div>
<div class="a" style="left:1765px;top:1069.500px;width:98px;height:1px;background:#8a8a8a"></div>
<div class="a" style="left:1811px;top:1063px;width:4px;height:13px;background:#555"></div>
<div class="t" style="left:1866px;top:1063px;font-size:13px;color:#8a8a8a">+</div>
<div class="t" style="left:1888px;top:1066px;font-size:10.300px;color:#555;letter-spacing:-0.336px">100%</div>

</div><style>
#pnl .d{position:absolute;white-space:nowrap;line-height:1;font-family:"DejaVu Sans","Liberation Sans",sans-serif;font-size:9.300px;color:#3c3c3c}
#pnl .b{font-family:"DejaVu Sans Condensed","DejaVu Sans",sans-serif;font-weight:bold;font-size:8.600px;color:#3a3a3a;letter-spacing:-.2px}
#pnl .sc{font-size:6.600px;letter-spacing:.1px;color:#444}
#pnl .sc b{font-weight:normal;font-size:8.600px}
#pnl .ln{position:absolute;left:1404.500px;width:448.500px;height:1px;background:#cfcfcf}
#pnl .hl{position:absolute;background:#b9b9f3}
#pnl .tb{position:absolute;top:258.500px;height:16px;background:#f4f4f4;border:1px solid #ababab}
</style>
<div id="pnl" class="a" style="left:0;top:0;width:0;height:0">
<div class="a" style="left:1273.500px;top:216px;width:646.500px;height:843px;background:#f0f0f0"></div>
<div class="t" style="left:1282.500px;top:227.800px;font-size:21.500px;color:#35875d;letter-spacing:-.1px;letter-spacing:-0.163px">DataSnipper - Document Viewer</div>
<svg style="left:1856px;top:233px" width="8" height="5" viewBox="0 0 8 5"><path d="M0 0h8L4 4.500Z" fill="#555"/></svg>
<svg style="left:1896.500px;top:231.500px" width="8" height="8" viewBox="0 0 8 8" stroke="#444" stroke-width="1.600"><path d="M.5 .5l7 7M7.500 .5l-7 7"/></svg>
<div class="a" style="left:1277.500px;top:253px;width:639.500px;height:806px;background:#e7e7e7"></div>
<div class="a" style="left:1897.500px;top:274px;width:19.500px;height:762px;background:#f0f0f0"></div>

<div class="tb" style="left:1285.500px;width:175px;background:#fff"></div><div class="a" style="left:1444.500px;top:260px;width:1px;height:14px;background:#ababab"></div>
<div class="t" style="left:1291px;top:260.500px;font-size:13px;color:#333;letter-spacing:-0.025px">Bank statement - Paymen</div>
<svg style="left:1449px;top:264px" width="8" height="5" viewBox="0 0 8 5"><path d="M0 0h8L4 4.500Z" fill="#444"/></svg>
<div class="tb" style="left:1470px;width:24.500px"></div>
<div class="tb" style="left:1494px;width:24.500px"></div>
<div class="tb" style="left:1522px;width:24.500px"></div>
<div class="tb" style="left:1546px;width:24.500px"></div>
<svg style="left:1476px;top:260px" width="13" height="13" viewBox="0 0 13 13" fill="none" stroke="#555" stroke-width="1"><circle cx="7.500" cy="5" r="3.800"/><path d="M5 8L1 12M5.500 5h4"/></svg>
<svg style="left:1500px;top:260px" width="13" height="13" viewBox="0 0 13 13" fill="none" stroke="#555" stroke-width="1"><circle cx="7.500" cy="5" r="3.800"/><path d="M5 8L1 12M5.500 5h4M7.500 3v4"/></svg>
<svg style="left:1528px;top:260px" width="13" height="13" viewBox="0 0 13 13" fill="none" stroke="#555" stroke-width="1"><path d="M2.500 4a4.500 4.500 0 1 1-.5 4M2 1v3.500h3.500"/></svg>
<svg style="left:1552px;top:260px" width="13" height="13" viewBox="0 0 13 13" fill="none" stroke="#555" stroke-width="1"><path d="M10.500 4a4.500 4.500 0 1 0 .5 4M11 1v3.500H7.500"/></svg>
<div class="tb" style="left:1580px;width:119px;background:#fff"></div><div class="a" style="left:1683.500px;top:260px;width:1px;height:14px;background:#ababab"></div>
<div class="t" style="left:1586px;top:260.500px;font-size:13px;color:#333;letter-spacing:0.121px">No selection</div>
<svg style="left:1687.500px;top:264px" width="8" height="5" viewBox="0 0 8 5"><path d="M0 0h8L4 4.500Z" fill="#444"/></svg>
<div class="tb" style="left:1709px;width:173px;background:#fff"></div><div class="tb" style="left:1881.500px;width:16.500px"></div>
<div class="t" style="left:1714px;top:265px;font-size:13.800px;color:#4a4a4a">18/01/2022</div>
<svg style="left:1885px;top:266.500px" width="10" height="10" viewBox="0 0 10 10" fill="none" stroke="#555" stroke-width="1"><circle cx="5.500" cy="4.500" r="3.200"/></svg>
<div class="a" style="left:1289.500px;top:273.500px;width:598.500px;height:514.500px;background:#fff;border:1px solid #c4c4c4;border-top:none"></div>
<div class="d" style="left:1343.500px;top:282.7px">20-07-2021</div>
<div class="d b" style="left:1404.500px;top:283.8px">Restaurant Bella Italia</div>
<div class="d" style="left:1404.500px;top:294.9px">Time: 22:19</div>
<div class="d" style="left:1404.500px;top:307.1px">Currency date: 20-07-2020</div>
<div class="d sc" style="left:1666px;top:283.7px"><b>O</b>NLINE <b>B</b>ANKING</div>
<div class="d b" style="right:-1852.5px;top:283.8px">- 165,50</div>
<div class="ln" style="top:327px"></div>
<div class="d" style="left:1343.500px;top:337.2px">16-07-2021</div>
<div class="d b" style="left:1404.500px;top:338.3px">Financers B.V.</div>
<div class="d" style="left:1404.500px;top:349.4px">Description: invoice 2019-939388</div>
<div class="d" style="left:1404.500px;top:361.6px">Valutadate: 16-07-2020</div>
<div class="d sc" style="left:1666px;top:338.2px"><b>O</b>NLINE <b>B</b>ANKING</div>
<div class="d b" style="right:-1852.5px;top:338.3px">- 4840,00</div>
<div class="ln" style="top:391px"></div>
<div class="d" style="left:1343.500px;top:401.2px">11-07-2021</div>
<div class="d b" style="left:1404.500px;top:402.3px">Digidentity BV</div>
<div class="d" style="left:1404.500px;top:413.2px">Description: invoice 2020-098475</div>
<div class="d" style="left:1404.500px;top:425.2px">Valutadate: 11-07-2020</div>
<div class="d" style="left:1404.500px;top:437.2px">IBAN: NL35RABO0102420173</div>
<div class="d sc" style="left:1666px;top:402.2px"><b>O</b>NLINE <b>B</b>ANKING</div>
<div class="d b" style="right:-1852.5px;top:402.3px">- 1512,40</div>
<div class="ln" style="top:466px"></div>
<div class="d" style="left:1343.500px;top:475.1px">07-07-2021</div>
<div class="d b" style="left:1404.500px;top:476.2px">LinkedIn</div>
<div class="d" style="left:1404.500px;top:487.3px">Description: 5723994764</div>
<div class="d" style="left:1404.500px;top:499.5px">IBAN: IE64IRCE92050112345678</div>
<div class="d sc" style="left:1666px;top:476.1px"><b>O</b>NLINE <b>B</b>ANKING</div>
<div class="d b" style="right:-1852.5px;top:476.2px">- 74,98</div>
<div class="ln" style="top:530px"></div>
<div class="d" style="left:1343.500px;top:540.2px">06-07-2021</div>
<div class="d b" style="left:1404.500px;top:541.3px">LinkedIn</div>
<div class="d" style="left:1404.500px;top:552.2px">Description: 5388106383</div>
<div class="d" style="left:1404.500px;top:564.2px">IBAN: IE64IRCE92050112345678</div>
<div class="d sc" style="left:1666px;top:541.2px"><b>O</b>NLINE <b>B</b>ANKING</div>
<div class="d b" style="right:-1852.5px;top:541.3px">- 74,98</div>
<div class="ln" style="top:585px"></div>
<div class="d" style="left:1343.500px;top:594.7px">20-06-2021</div>
<div class="d b" style="left:1404.500px;top:595.8px">CCV*LOCATIE NRD AMSTERDAM NLD</div>
<div class="d" style="left:1404.500px;top:606.9px">Payment ID: 002 288398 12:54</div>
<div class="d" style="left:1404.500px;top:619.1px">Valutadate: 20-03-2020</div>
<div class="d sc" style="left:1666px;top:595.7px"><b>O</b>NLINE <b>B</b>ANKING</div>
<div class="d b" style="right:-1852.5px;top:595.8px">- 48,00</div>
<div class="ln" style="top:649px"></div>
<div class="hl" style="left:1342.500px;top:657.500px;width:55.500px;height:11.500px"></div>
<div class="hl" style="left:1459px;top:670px;width:29.500px;height:12px"></div>
<div class="hl" style="left:1812.800px;top:657.500px;width:36px;height:11.500px"></div>
<div class="d" style="left:1343.500px;top:658.7px">18-01-2022</div>
<div class="d b" style="left:1404.500px;top:659.8px">LeasePage</div>
<div class="d" style="left:1404.500px;top:671.2px">Description:23781</div>
<div class="d" style="left:1404.500px;top:683.7px">IBAN: NL88ABNA5228863516</div>
<div class="d sc" style="left:1613.5px;top:659.7px"><b>O</b>NLINE <b>B</b>ANKING</div>
<div class="d b" style="right:-1848.5px;top:659.8px">- 6374,50</div>
<svg style="left:1903px;top:278.500px" width="9" height="6" viewBox="0 0 9 6" fill="none" stroke="#686868" stroke-width="1.900"><path d="M.7 5l3.800-3.800L8.300 5"/></svg>
<div class="a" style="left:1898.500px;top:436px;width:18px;height:91px;background:#cdcdcd"></div>
<svg style="left:1903px;top:1024px" width="9" height="6" viewBox="0 0 9 6" fill="none" stroke="#686868" stroke-width="1.900"><path d="M.7 1l3.800 3.800L8.300 1"/></svg>
<div class="a" style="left:1289.500px;top:809.500px;width:598.500px;height:230px;background:#fff;border:1px solid #c4c4c4"></div>
<div class="t" style="left:1341.500px;top:822.500px;font-family:'Liberation Serif',serif;font-weight:bold;font-size:26px;color:#0c0c64;letter-spacing:1.200px">ING</div>
<svg style="left:1397px;top:821px" width="38" height="25" viewBox="0 0 38 25">
<path d="M7 19.500L1.800 21.300Q.3 23.600 2.500 23.600H30.600Q31.500 16 27 12.500 22 10 16 13Z" fill="#f47b20"/>
<ellipse cx="13" cy="11" rx="8" ry="9.500" fill="#f47b20"/>
<ellipse cx="11.600" cy="8.800" rx="3" ry="4.600" fill="#fdeedd"/>
<path d="M10 8.500h3.200M11.600 8.500v3.500" stroke="#f6a05a" stroke-width=".7" fill="none"/>
<path d="M30 23.300Q36.800 21 35.600 13 34.200 6.500 28 5.600" fill="none" stroke="#f47b20" stroke-width="1.300"/>
<ellipse cx="27.600" cy="5.500" rx="1.800" ry="1.200" fill="#f47b20"/>
<path d="M14 21.500h4M21 21.500h4M17 18.500h4" stroke="#fbc89b" stroke-width=".8"/>
</svg>
<div class="t" style="left:1679.500px;top:829.800px;font-family:'DejaVu Sans',sans-serif;font-size:17.100px;color:#3a3a3a">Bank statement</div>
<svg style="left:1833px;top:827px" width="22" height="22" viewBox="0 0 22 22" fill="none" stroke="#ef7d55" stroke-width="1.200"><rect x="1.500" y="8.500" width="18" height="12" rx="1.500"/><path d="M4 8.500Q5 1.500 10.500 1.500T17 8.500"/><path d="M6.500 8.500Q7 4 10.500 4T14.500 8.500"/><rect x="14.500" y="12.500" width="5" height="4"/><path d="M9 5.500h3M9.500 7.500h2" stroke-width=".8"/></svg>
<div class="d" style="right:-1852.500px;top:854.500px;font-size:8.300px;letter-spacing:-.2px"><span style="font-size:8px">Q</span><span style="font-size:6.600px">UESTION</span>? Call 020 22 888</div>
<div class="a" style="left:1342px;top:887.300px;width:511px;height:4px;border-top:1.400px solid #858585;border-radius:3px"></div>
<div class="d" style="left:1343.500px;top:894px;font-size:7px">Date</div>
<div class="d" style="left:1404.500px;top:894px;font-size:7px"><span style="font-size:7px">N<span style="font-size:5.600px">AME</span></span> / Description</div>
<div class="d" style="left:1666px;top:894px;font-size:7px">Type</div>
<div class="d" style="right:-1852.500px;top:894px;font-size:7px"><span style="font-size:7px">A<span style="font-size:5.600px">MOUNT</span></span> (EUR)</div>
<div class="d" style="left:1343.500px;top:913.4px">07-06-2022</div>
<div class="d b" style="left:1404.500px;top:914.5px">LinkedIn</div>
<div class="d" style="left:1404.500px;top:924.8px">Description: 5320984863</div>
<div class="d" style="left:1404.500px;top:936.2px">IBAN: IE64IRCE92050112345678</div>
<div class="d sc" style="left:1666px;top:914.4px"><b>O</b>NLINE <b>B</b>ANKING</div>
<div class="d b" style="right:-1852.5px;top:914.5px">- 74,98</div>
<div class="ln" style="top:965px"></div>
<div class="d" style="left:1343.500px;top:974.2px">03-06-2022</div>
<div class="d b" style="left:1404.500px;top:975.3px">CCV*VOLKSHOTEL AMSTERDAM NLD</div>
<div class="d" style="left:1404.500px;top:986.6px">Description: coffee corner CCV*</div>
<div class="d" style="left:1404.500px;top:999.0px">IBAN:NL03INGB0008704027</div>
<div class="d sc" style="left:1666px;top:975.2px"><b>O</b>NLINE <b>B</b>ANKING</div>
<div class="d b" style="right:-1852.5px;top:975.3px">- 11,80</div>
<div class="ln" style="top:1029px"></div>
<div class="a" style="left:1277.500px;top:1036px;width:639.500px;height:23px;background:#f0f0f0"></div><div class="a" style="left:1277.500px;top:1036.500px;width:620px;height:19px;background:#ebebeb"></div>
<svg style="left:1283px;top:1041px" width="6" height="9" viewBox="0 0 6 9" fill="none" stroke="#c6c6c6" stroke-width="1.500"><path d="M5 .7L1.200 4.500 5 8.300"/></svg>
<svg style="left:1889px;top:1041px" width="6" height="9" viewBox="0 0 6 9" fill="none" stroke="#c6c6c6" stroke-width="1.500"><path d="M1 .7l3.800 3.800L1 8.300"/></svg>
</div></body></html>
